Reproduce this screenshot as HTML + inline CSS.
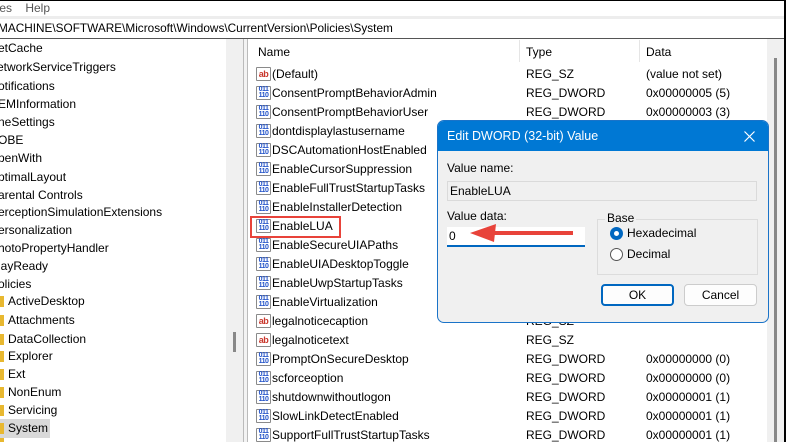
<!DOCTYPE html>
<html><head><style>
*{margin:0;padding:0;box-sizing:border-box}
body{width:786px;height:442px;overflow:hidden;background:#fff;font-family:"Liberation Sans",sans-serif;font-size:12px;color:#000;position:relative}
.a{position:absolute;white-space:nowrap}
.r{position:absolute;height:19px;line-height:19px;white-space:nowrap}
.ic{position:absolute;width:15px;height:14px;top:2px;left:0;border:1px solid #8a8a8a;border-radius:1px;background:#fff;font-size:9px;line-height:12px;font-weight:bold;text-align:center;letter-spacing:-0.5px}
.sz{color:#c9372c}
.dw{color:#1f50c8;font-size:7px;line-height:6px;padding-top:0}
.fold{position:absolute;left:0;width:4px;height:11px;top:4px;background:#e8b830}
.t{position:absolute;height:18px;line-height:18px;white-space:nowrap}
</style></head><body>
<div class="a" style="left:0;top:0;width:786px;height:1px;background:#000"></div>
<div class="a" style="left:784px;top:0;width:2px;height:442px;background:#000"></div>
<div class="a" style="left:-4px;top:0;line-height:16px;color:#555">tes&nbsp;&nbsp;&nbsp;&nbsp;Help</div>
<div class="a" style="left:0;top:16px;width:784px;height:3px;background:#ededed"></div>
<div class="a" style="left:-2px;top:19px;line-height:19px;font-size:11.8px">MACHINE\SOFTWARE\Microsoft\Windows\CurrentVersion\Policies\System</div>
<div class="a" style="left:0;top:38px;width:784px;height:1px;background:#555"></div>
<div class="a" style="left:226px;top:39px;width:17px;height:403px;background:#f0f0f0"></div>
<div class="a" style="left:233px;top:332px;width:3px;height:20px;background:#888"></div>
<div class="a" style="left:243px;top:39px;width:1px;height:403px;background:#bbb"></div>
<div class="a" style="left:244px;top:39px;width:3px;height:403px;background:#f3f3f3"></div>
<div class="a" style="left:247px;top:39px;width:1px;height:403px;background:#bbb"></div>
<div class="a" style="left:767px;top:39px;width:17px;height:403px;background:#f0f0f0"></div>
<div class="a" style="left:774px;top:58px;width:3px;height:384px;background:#888"></div>
<div class="a" style="left:258px;top:44px;line-height:17px">Name</div>
<div class="a" style="left:519px;top:40px;width:1px;height:22px;background:#e5e5e5"></div>
<div class="a" style="left:526px;top:44px;line-height:17px">Type</div>
<div class="a" style="left:639px;top:40px;width:1px;height:22px;background:#e5e5e5"></div>
<div class="a" style="left:646px;top:44px;line-height:17px">Data</div>
<!-- tree -->
<div class="t" style="left:-2px;top:39px">etCache</div>
<div class="t" style="left:-3px;top:58px">etworkServiceTriggers</div>
<div class="t" style="left:-2px;top:77px">otifications</div>
<div class="t" style="left:-2px;top:95px">EMInformation</div>
<div class="t" style="left:-2px;top:113px">neSettings</div>
<div class="t" style="left:-2px;top:131px">OBE</div>
<div class="t" style="left:-2px;top:149px">penWith</div>
<div class="t" style="left:-2px;top:168px">ptimalLayout</div>
<div class="t" style="left:-2px;top:186px">arental Controls</div>
<div class="t" style="left:-2px;top:203px">erceptionSimulationExtensions</div>
<div class="t" style="left:-2px;top:221px">ersonalization</div>
<div class="t" style="left:-2px;top:239px">hotoPropertyHandler</div>
<div class="t" style="left:-2px;top:257px">layReady</div>
<div class="t" style="left:-2px;top:275px">olicies</div>
<div class="t" style="left:0;top:292px"><span class="fold"></span><span style="margin-left:8px">ActiveDesktop</span></div>
<div class="t" style="left:0;top:311px"><span class="fold"></span><span style="margin-left:8px">Attachments</span></div>
<div class="t" style="left:0;top:330px"><span class="fold"></span><span style="margin-left:8px">DataCollection</span></div>
<div class="t" style="left:0;top:347px"><span class="fold"></span><span style="margin-left:8px">Explorer</span></div>
<div class="t" style="left:0;top:365px"><span class="fold"></span><span style="margin-left:8px">Ext</span></div>
<div class="t" style="left:0;top:383px"><span class="fold"></span><span style="margin-left:8px">NonEnum</span></div>
<div class="t" style="left:0;top:401px"><span class="fold"></span><span style="margin-left:8px">Servicing</span></div>
<div class="a" style="left:0;top:419px;width:50px;height:19px;background:#d9d9d9"></div>
<div class="t" style="left:0;top:419px"><span class="fold"></span><span style="margin-left:8px">System</span></div>
<div class="a" style="left:0;top:438px;width:4px;height:4px;background:#e8b830"></div>
<!-- rows -->
<div class="r" style="left:256px;top:65px"><span class="ic sz">ab</span><span style="margin-left:16px">(Default)</span></div>
<div class="r" style="left:526px;top:65px">REG_SZ</div><div class="r" style="left:646px;top:65px">(value not set)</div>
<div class="r" style="left:256px;top:84px"><span class="ic dw">011<br>110</span><span style="margin-left:16px">ConsentPromptBehaviorAdmin</span></div>
<div class="r" style="left:526px;top:84px">REG_DWORD</div><div class="r" style="left:646px;top:84px">0x00000005 (5)</div>
<div class="r" style="left:256px;top:103px"><span class="ic dw">011<br>110</span><span style="margin-left:16px">ConsentPromptBehaviorUser</span></div>
<div class="r" style="left:526px;top:103px">REG_DWORD</div><div class="r" style="left:646px;top:103px">0x00000003 (3)</div>
<div class="r" style="left:256px;top:122px"><span class="ic dw">011<br>110</span><span style="margin-left:16px">dontdisplaylastusername</span></div>
<div class="r" style="left:256px;top:141px"><span class="ic dw">011<br>110</span><span style="margin-left:16px">DSCAutomationHostEnabled</span></div>
<div class="r" style="left:256px;top:160px"><span class="ic dw">011<br>110</span><span style="margin-left:16px">EnableCursorSuppression</span></div>
<div class="r" style="left:256px;top:179px"><span class="ic dw">011<br>110</span><span style="margin-left:16px">EnableFullTrustStartupTasks</span></div>
<div class="r" style="left:256px;top:198px"><span class="ic dw">011<br>110</span><span style="margin-left:16px">EnableInstallerDetection</span></div>
<div class="r" style="left:256px;top:217px"><span class="ic dw">011<br>110</span><span style="margin-left:16px">EnableLUA</span></div>
<div class="a" style="left:250px;top:216px;width:91px;height:22px;border:2px solid #e8433a"></div>
<div class="r" style="left:256px;top:236px"><span class="ic dw">011<br>110</span><span style="margin-left:16px">EnableSecureUIAPaths</span></div>
<div class="r" style="left:256px;top:255px"><span class="ic dw">011<br>110</span><span style="margin-left:16px">EnableUIADesktopToggle</span></div>
<div class="r" style="left:256px;top:274px"><span class="ic dw">011<br>110</span><span style="margin-left:16px">EnableUwpStartupTasks</span></div>
<div class="r" style="left:256px;top:293px"><span class="ic dw">011<br>110</span><span style="margin-left:16px">EnableVirtualization</span></div>
<div class="r" style="left:256px;top:312px"><span class="ic sz">ab</span><span style="margin-left:16px">legalnoticecaption</span></div>
<div class="r" style="left:526px;top:312px">REG_SZ</div>
<div class="r" style="left:256px;top:331px"><span class="ic sz">ab</span><span style="margin-left:16px">legalnoticetext</span></div>
<div class="r" style="left:526px;top:331px">REG_SZ</div>
<div class="r" style="left:256px;top:350px"><span class="ic dw">011<br>110</span><span style="margin-left:16px">PromptOnSecureDesktop</span></div>
<div class="r" style="left:526px;top:350px">REG_DWORD</div><div class="r" style="left:646px;top:350px">0x00000000 (0)</div>
<div class="r" style="left:256px;top:369px"><span class="ic dw">011<br>110</span><span style="margin-left:16px">scforceoption</span></div>
<div class="r" style="left:526px;top:369px">REG_DWORD</div><div class="r" style="left:646px;top:369px">0x00000000 (0)</div>
<div class="r" style="left:256px;top:388px"><span class="ic dw">011<br>110</span><span style="margin-left:16px">shutdownwithoutlogon</span></div>
<div class="r" style="left:526px;top:388px">REG_DWORD</div><div class="r" style="left:646px;top:388px">0x00000001 (1)</div>
<div class="r" style="left:256px;top:407px"><span class="ic dw">011<br>110</span><span style="margin-left:16px">SlowLinkDetectEnabled</span></div>
<div class="r" style="left:526px;top:407px">REG_DWORD</div><div class="r" style="left:646px;top:407px">0x00000001 (1)</div>
<div class="r" style="left:256px;top:426px"><span class="ic dw">011<br>110</span><span style="margin-left:16px">SupportFullTrustStartupTasks</span></div>
<div class="r" style="left:526px;top:426px">REG_DWORD</div><div class="r" style="left:646px;top:426px">0x00000001 (1)</div>
<!-- dialog -->
<div class="a" style="left:437px;top:120px;width:332px;height:203px;border:1px solid #1a73c8;border-radius:7px;background:#f0f0f0;overflow:hidden">
 <div class="a" style="left:0;top:0;width:330px;height:30px;background:#0078d4;color:#fff;line-height:30px;padding-left:9px;font-size:12.5px">Edit DWORD (32-bit) Value</div>
 <svg class="a" style="left:306px;top:10px" width="11" height="11"><path d="M0.5 0.5L10.5 10.5M10.5 0.5L0.5 10.5" stroke="#fff" stroke-width="1.2"/></svg>
 <div class="a" style="left:9px;top:40px">Value name:</div>
 <div class="a" style="left:9px;top:60px;width:310px;height:20px;border:1px solid #dadada;background:#f0f0f0;line-height:18px;padding-left:2px">EnableLUA</div>
 <div class="a" style="left:9px;top:88px">Value data:</div>
 <div class="a" style="left:9px;top:106px;width:138px;height:20px;background:#fff;border-bottom:2px solid #0067c0;line-height:18px;padding-left:2px">0</div>
 <div class="a" style="left:159px;top:98px;width:161px;height:56px;border:1px solid #dcdcdc"></div>
 <div class="a" style="left:167px;top:90px;background:#f0f0f0;padding:0 2px">Base</div>
 <div class="a" style="left:172px;top:106px;width:13px;height:13px;border-radius:50%;background:#0067c0"><div class="a" style="left:4px;top:4px;width:5px;height:5px;border-radius:50%;background:#fff"></div></div>
 <div class="a" style="left:189px;top:105px">Hexadecimal</div>
 <div class="a" style="left:172px;top:127px;width:13px;height:13px;border-radius:50%;border:1px solid #555;background:#fff"></div>
 <div class="a" style="left:189px;top:126px">Decimal</div>
 <div class="a" style="left:163px;top:163px;width:73px;height:22px;border:2px solid #0067c0;border-radius:4px;background:#fdfdfd;text-align:center;line-height:18px">OK</div>
 <div class="a" style="left:246px;top:163px;width:73px;height:22px;border:1px solid #ccc;border-radius:4px;background:#fdfdfd;text-align:center;line-height:20px">Cancel</div>
</div>
<svg class="a" style="left:460px;top:220px" width="120" height="26"><path d="M113 13H30" stroke="#e8433a" stroke-width="4"/><path d="M10 13L36 4L34 22Z" fill="#e8433a"/></svg>
</body></html>
